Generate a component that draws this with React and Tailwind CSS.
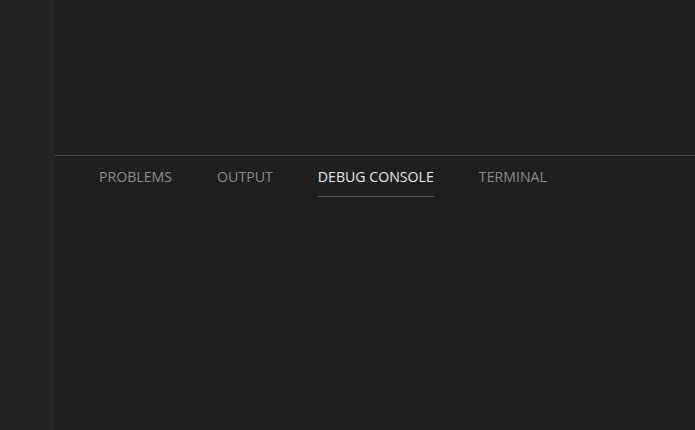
import React from "react";

const tabs = ["PROBLEMS", "OUTPUT", "DEBUG CONSOLE", "TERMINAL"];

const App = () => {
    const active = "DEBUG CONSOLE";

    return (
        <div className="flex h-[430px] w-[695px] bg-[#1f1f1f] font-['Open_Sans',sans-serif] overflow-hidden">
            <div className="w-[54px] shrink-0 bg-[#252526]" />
            <div className="flex flex-1 flex-col">
                <div className="h-[155px] shrink-0" />
                <div className="border-t border-[#414141]">
                    <div className="flex gap-[45px] pl-[45px]">
                        {tabs.map((tab) => (
                            <div
                                key={tab}
                                className={`pt-[11px] pb-[9px] text-[14.15px] leading-[20px] border-b ${tab === active
                                        ? "text-[#e7e7e7] border-[#5a5a5a]"
                                        : "text-[#8b8b8b] border-transparent"
                                    }`}
                            >
                                {tab}
                            </div>
                        ))}
                    </div>
                </div>
            </div>
        </div>
    );
};

export default App;
